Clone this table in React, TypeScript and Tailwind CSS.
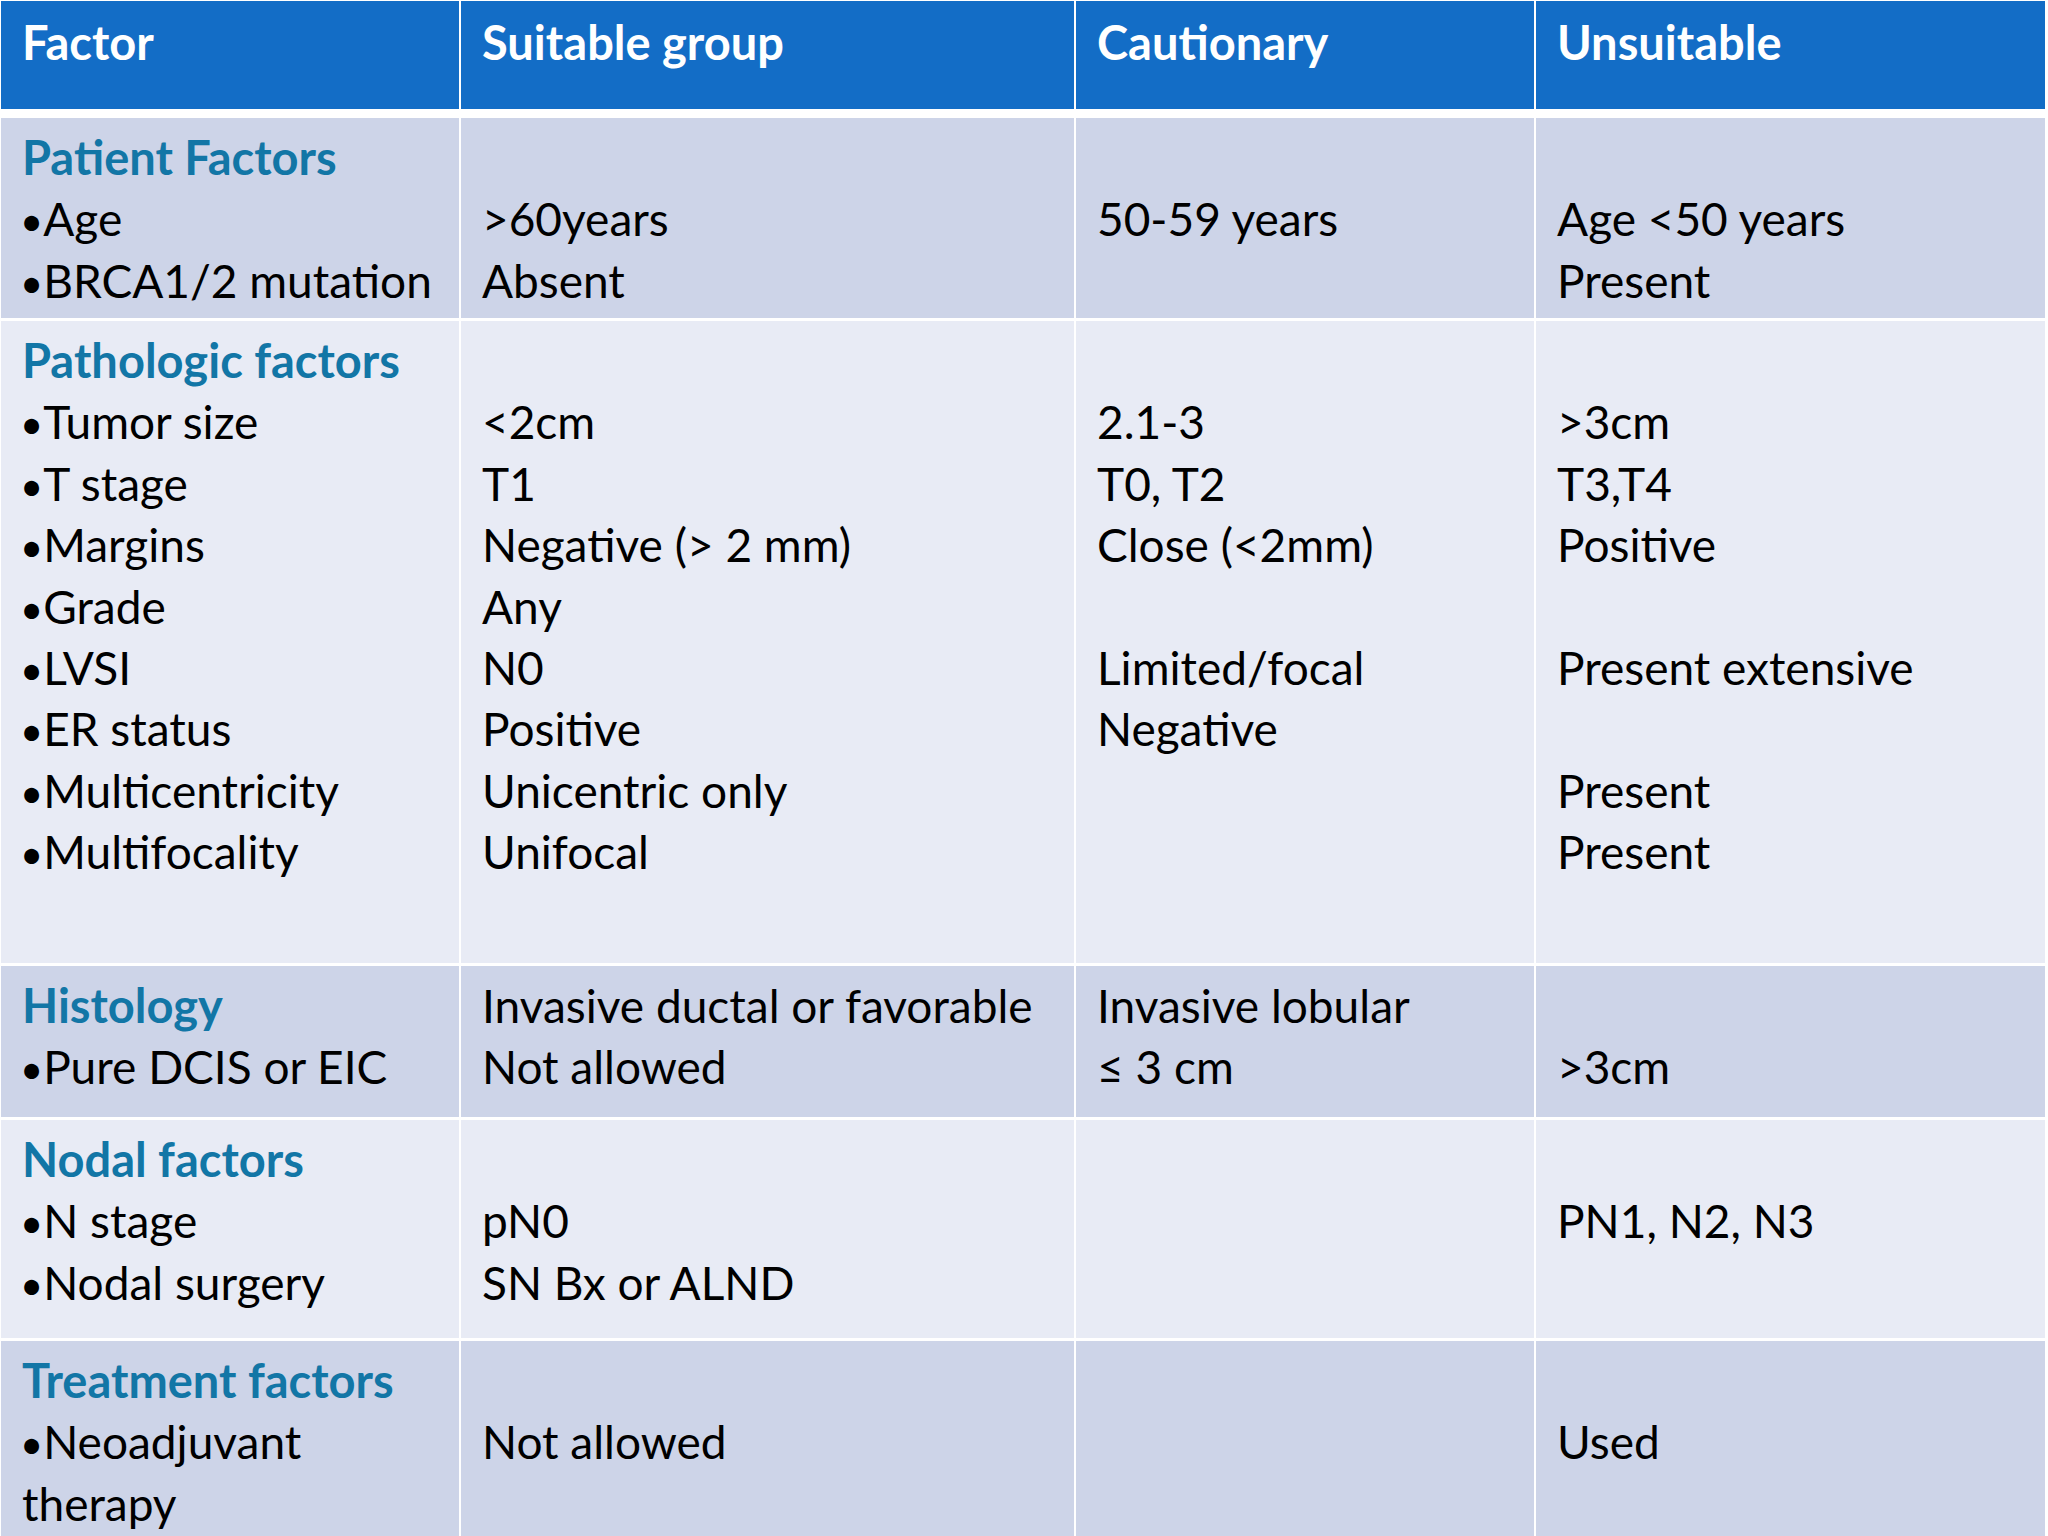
import React from "react"

type Row = {
  bg: string
  height: string
  cells: string[][]
}

// first entry of column 0 is the group heading (teal, bold)
const rows: Row[] = [
  {
    bg: "bg-[#cdd4e8]",
    height: "h-[200px]",
    cells: [
      ["Patient Factors", "•Age", "•BRCA1/2 mutation"],
      ["", ">60years", "Absent"],
      ["", "50-59 years", ""],
      ["", "Age <50 years", "Present"],
    ],
  },
  {
    bg: "bg-[#e8ebf5]",
    height: "h-[642px]",
    cells: [
      [
        "Pathologic factors",
        "•Tumor size",
        "•T stage",
        "•Margins",
        "•Grade",
        "•LVSI",
        "•ER status",
        "•Multicentricity",
        "•Multifocality",
      ],
      ["", "<2cm", "T1", "Negative (> 2 mm)", "Any", "N0", "Positive", "Unicentric only", "Unifocal"],
      ["", "2.1-3", "T0, T2", "Close (<2mm)", "", "Limited/focal", "Negative"],
      ["", ">3cm", "T3,T4", "Positive", "", "Present extensive", "", "Present", "Present"],
    ],
  },
  {
    bg: "bg-[#cdd4e8]",
    height: "h-[151px]",
    cells: [
      ["Histology", "•Pure DCIS or EIC"],
      ["Invasive ductal or favorable", "Not allowed"],
      ["Invasive lobular", "≤ 3 cm"],
      ["", ">3cm"],
    ],
  },
  {
    bg: "bg-[#e8ebf5]",
    height: "h-[218px]",
    cells: [
      ["Nodal factors", "•N stage", "•Nodal surgery"],
      ["", "pN0", "SN Bx or ALND"],
      [],
      ["", "PN1, N2, N3"],
    ],
  },
  {
    bg: "bg-[#cdd4e8]",
    height: "h-[240px]",
    cells: [
      ["Treatment factors", "•Neoadjuvant", "therapy"],
      ["", "Not allowed"],
      [],
      ["", "Used"],
    ],
  },
]

const cols = "grid grid-cols-[458px_613px_458px_509px] gap-x-[2px]"

function Line({ text }: { text: string }) {
  if (!text) return <div>{"\u00a0"}</div>
  if (text.startsWith("•")) {
    return (
      <div className="whitespace-pre">
        <span className="-ml-[2px] text-[40px] leading-none">•</span>
        {text.slice(1)}
      </div>
    )
  }
  return <div className="whitespace-pre">{text}</div>
}

export default function App() {
  return (
    <div
      className="w-[2048px] h-[1536px] overflow-hidden bg-white pl-[1px] pt-[1px]"
      style={{ fontFamily: "Lato, 'Open Sans', sans-serif" }}
    >
      <div className={`${cols} h-[108px] mb-[9px]`}>
        {["Factor", "Suitable group", "Cautionary", "Unsuitable"].map((h) => (
          <div key={h} className="bg-[#136dc6] px-[21px] pt-[11px] text-[47px] leading-[61.4px] font-bold text-white">
            {h}
          </div>
        ))}
      </div>

      <div className="flex flex-col gap-y-[3px]">
        {rows.map((row, ri) => (
          <div key={ri} className={`${cols} ${row.height}`}>
            {row.cells.map((lines, ci) => (
              <div key={ci} className={`${row.bg} px-[21px] pt-[9px] text-[46px] leading-[61.4px] text-black`}>
                {lines.map((line, li) =>
                  ci === 0 && li === 0 ? (
                    <div key={li} className="font-bold text-[47px] text-[#1276a6]">
                      {line}
                    </div>
                  ) : (
                    <Line key={li} text={line} />
                  )
                )}
              </div>
            ))}
          </div>
        ))}
      </div>
    </div>
  )
}
